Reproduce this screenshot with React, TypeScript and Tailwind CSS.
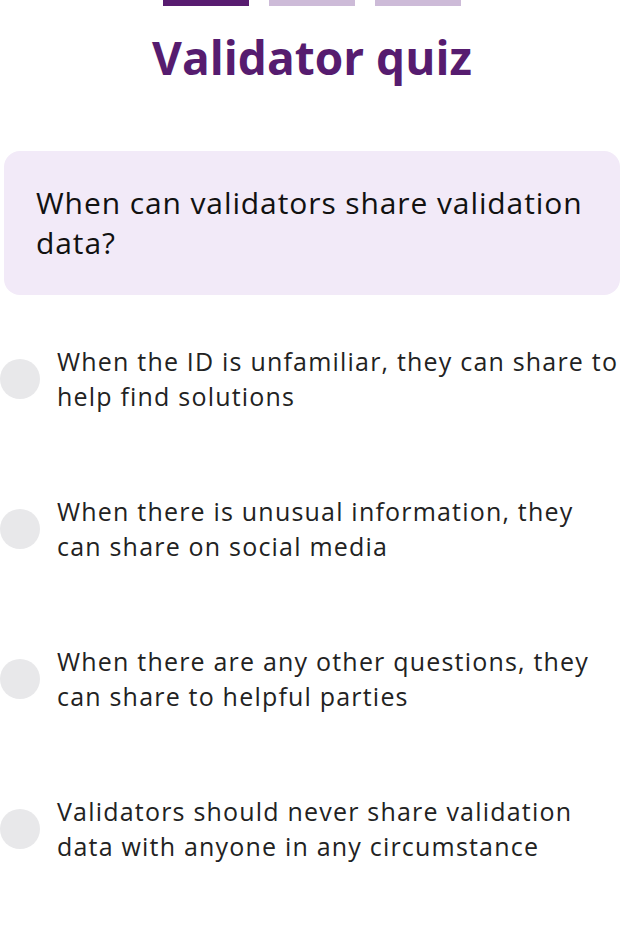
const options = [
  'When the ID is unfamiliar, they can share to help find solutions',
  'When there is unusual information, they can share on social media',
  'When there are any other questions, they can share to helpful parties',
  'Validators should never share validation data with anyone in any circumstance',
]

export default function App() {
  return (
    <div className="min-h-screen bg-white font-['Open_Sans',sans-serif]">
      <div className="w-[624px]">
        {/* Progress */}
        <div className="flex justify-center gap-5">
          <div className="h-[6px] w-[86px] bg-[#581c70]" />
          <div className="h-[6px] w-[86px] bg-[#cdbbd8]" />
          <div className="h-[6px] w-[86px] bg-[#cdbbd8]" />
        </div>

        <h1 className="mt-[23px] text-center text-[46px] leading-[56px] font-bold text-[#561c6f]">
          Validator quiz
        </h1>

        {/* Question */}
        <div className="mx-1 mt-[66px] rounded-2xl bg-[#f2eaf8] px-8 py-8">
          <p className="text-[30px] leading-[40px] tracking-[0.9px] text-[#111]">
            When can validators share validation data?
          </p>
        </div>

        {/* Options */}
        <div className="mt-[49px] flex flex-col">
          {options.map((o) => (
            <div key={o} className="flex h-[150px] items-start">
              <div className="flex items-center gap-[17px]">
                <span className="h-10 w-10 shrink-0 rounded-full bg-[#e8e8ea]" />
                <span className="w-[567px] text-[25px] leading-[35px] tracking-[1.2px] text-[#222]">{o}</span>
              </div>
            </div>
          ))}
        </div>
      </div>
    </div>
  )
}
